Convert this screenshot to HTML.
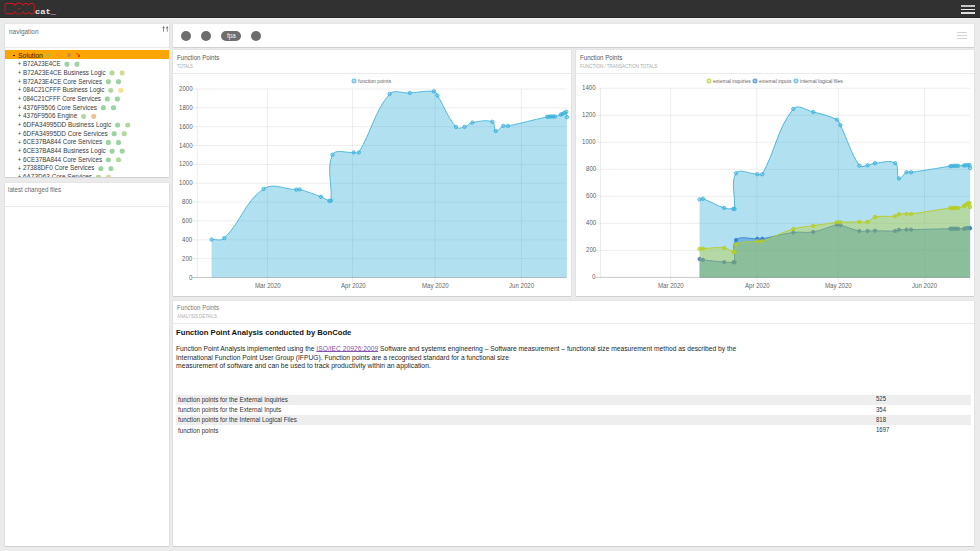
<!DOCTYPE html>
<html><head><meta charset="utf-8">
<style>
*{margin:0;padding:0;box-sizing:border-box}
html,body{width:980px;height:551px;overflow:hidden;background:#ebebeb;font-family:"Liberation Sans",sans-serif;color:#333}
.a{position:absolute}
.t{position:absolute;white-space:nowrap;transform-origin:0 0}
.pn{position:absolute;background:#fff;box-shadow:0 0 0 0.6px rgba(0,0,0,.045),0 0.7px 0.5px 0.2px rgba(0,0,0,.09)}
.sep{position:absolute;height:1px;background:#ebebeb}
.dot{position:absolute;width:4.8px;height:4.8px;border-radius:1.8px}
</style></head><body>

<div class="a" style="left:0;top:0;width:980px;height:17px;background:#313131"></div>
<div class="a" style="left:0;top:17px;width:980px;height:1px;background:#272727"></div>
<div class="a" style="left:0;top:18px;width:980px;height:1.3px;background:#f3f3f3"></div>
<svg class="a" style="left:0;top:0" width="40" height="18" viewBox="0 0 40 18"><g fill="none" stroke="#d8141a" stroke-width="1.7" stroke-linejoin="round"><path d="M5.5 5.2 Q5.5 3.9 6.8 3.9 L11.9 3.9 Q14.6 3.9 14.6 6.6 L14.6 10.6 Q14.6 13.3 11.9 13.3 L6.8 13.3 Q5.5 13.3 5.5 12 Z"/><path d="M24.3 8.6 A5.15 5.15 0 1 1 14.0 8.6 A5.15 5.15 0 1 1 24.3 8.6 Z"/><path d="M23.7 6.6 Q23.7 3.9 26.0 3.9 L26.9 3.9 L28.5 5.7 L30.1 3.9 L32.5 3.9 Q33.8 3.9 33.8 5.2 L33.8 12.0 Q33.8 13.3 32.5 13.3 L30.1 13.3 L28.5 11.5 L26.9 13.3 L26.0 13.3 Q23.7 13.3 23.7 10.6 Z"/></g><g fill="#313131"><path d="M5.5 5.2 Q5.5 3.9 6.8 3.9 L11.9 3.9 Q14.6 3.9 14.6 6.6 L14.6 10.6 Q14.6 13.3 11.9 13.3 L6.8 13.3 Q5.5 13.3 5.5 12 Z"/><path d="M24.3 8.6 A5.15 5.15 0 1 1 14.0 8.6 A5.15 5.15 0 1 1 24.3 8.6 Z"/><path d="M23.7 6.6 Q23.7 3.9 26.0 3.9 L26.9 3.9 L28.5 5.7 L30.1 3.9 L32.5 3.9 Q33.8 3.9 33.8 5.2 L33.8 12.0 Q33.8 13.3 32.5 13.3 L30.1 13.3 L28.5 11.5 L26.9 13.3 L26.0 13.3 Q23.7 13.3 23.7 10.6 Z"/></g><circle cx="19.15" cy="8.6" r="0.8" fill="#e0141a"/></svg>
<div class="t" style="left:35.00px;top:5.05px;font:bold 8.80px/12px 'Liberation Mono',monospace;color:#e6e6e6;transform:scaleX(0.9600);transform:scaleX(1) scaleY(0.82);transform-origin:0 11px">cat_</div>
<div class="a" style="left:960.5px;top:5.25px;width:14.6px;height:1.7px;background:#c4c4c4"></div>
<div class="a" style="left:960.5px;top:8.75px;width:14.6px;height:1.7px;background:#e6e6e6"></div>
<div class="a" style="left:960.5px;top:12.45px;width:14.6px;height:1.7px;background:#e0e0e0"></div>
<div class="pn" style="left:5px;top:24px;width:164px;height:153px"></div>
<div class="t" style="left:8.50px;top:26.82px;font:normal 6.30px/9px 'Liberation Sans',sans-serif;color:#6a6a6a;transform:scaleX(1.0306)">navigation</div>
<svg class="a" style="left:160px;top:24px" width="10" height="10" viewBox="0 0 10 10"><g fill="#777" stroke="none"><path d="M3.6 2.1 L5.0 4.3 L4.0 4.3 L4.0 7.8 L3.2 7.8 L3.2 4.3 L2.2 4.3 Z"/><path d="M7.2 2.1 L8.6 4.3 L7.6 4.3 L7.6 7.8 L6.8 7.8 L6.8 4.3 L5.8 4.3 Z"/></g></svg>
<div class="sep" style="left:5px;top:47px;width:164px"></div>
<div class="a" style="left:5px;top:50.4px;width:164px;height:8.5px;background:#ffa500"></div>
<div class="a" style="left:12.6px;top:54.5px;width:2px;height:0.9px;background:#3a2a00"></div>
<div class="t" style="left:18.00px;top:50.88px;font:normal 7.27px/10px 'Liberation Sans',sans-serif;color:#2f2400;transform:scaleX(0.9477)">Solution</div>
<div class="dot" style="left:46.10px;top:52.6px;background:#c8b428"></div>
<div class="dot" style="left:56.30px;top:52.6px;background:#fb9e14"></div>
<div class="dot" style="left:66.55px;top:52.6px;background:#c88f4c"></div>
<svg class="a" style="left:75px;top:51px" width="8" height="8" viewBox="0 0 8 8"><g stroke="#e3300f" stroke-width="1.0" fill="#e3300f"><line x1="1.4" y1="2.0" x2="4.2" y2="4.8"/><path d="M5.1 5.9 L2.4 5.7 L4.9 3.2 Z" stroke="none"/></g></svg>
<div class="a" style="left:5px;top:58.9px;width:164px;height:117.7px;overflow:hidden"><div class="a" style="left:-5px;top:-58.9px;width:980px;height:300px">
<div class="t" style="left:18.00px;top:59.34px;font:normal 6.80px/10px 'Liberation Sans',sans-serif;color:#333;transform:scaleX(0.7303)">+</div>
<div class="t" style="left:23.10px;top:59.18px;font:normal 7.27px/10px 'Liberation Sans',sans-serif;color:#3a3a3a;transform:scaleX(0.8381)">B72A23E4CE</div>
<div class="t" style="left:18.00px;top:68.03px;font:normal 6.80px/10px 'Liberation Sans',sans-serif;color:#333;transform:scaleX(0.7303)">+</div>
<div class="t" style="left:23.10px;top:67.87px;font:normal 7.27px/10px 'Liberation Sans',sans-serif;color:#3a3a3a;transform:scaleX(0.8634)">B72A23E4CE Business Logic</div>
<div class="t" style="left:18.00px;top:76.72px;font:normal 6.80px/10px 'Liberation Sans',sans-serif;color:#333;transform:scaleX(0.7303)">+</div>
<div class="t" style="left:23.10px;top:76.56px;font:normal 7.27px/10px 'Liberation Sans',sans-serif;color:#3a3a3a;transform:scaleX(0.8548)">B72A23E4CE Core Services</div>
<div class="t" style="left:18.00px;top:85.41px;font:normal 6.80px/10px 'Liberation Sans',sans-serif;color:#333;transform:scaleX(0.7303)">+</div>
<div class="t" style="left:23.10px;top:85.25px;font:normal 7.27px/10px 'Liberation Sans',sans-serif;color:#3a3a3a;transform:scaleX(0.8572)">084C21CFFF Business Logic</div>
<div class="t" style="left:18.00px;top:94.10px;font:normal 6.80px/10px 'Liberation Sans',sans-serif;color:#333;transform:scaleX(0.7303)">+</div>
<div class="t" style="left:23.10px;top:93.94px;font:normal 7.27px/10px 'Liberation Sans',sans-serif;color:#3a3a3a;transform:scaleX(0.8505)">084C21CFFF Core Services</div>
<div class="t" style="left:18.00px;top:102.79px;font:normal 6.80px/10px 'Liberation Sans',sans-serif;color:#333;transform:scaleX(0.7303)">+</div>
<div class="t" style="left:23.10px;top:102.63px;font:normal 7.27px/10px 'Liberation Sans',sans-serif;color:#3a3a3a;transform:scaleX(0.8767)">4376F9506 Core Services</div>
<div class="t" style="left:18.00px;top:111.48px;font:normal 6.80px/10px 'Liberation Sans',sans-serif;color:#333;transform:scaleX(0.7303)">+</div>
<div class="t" style="left:23.10px;top:111.32px;font:normal 7.27px/10px 'Liberation Sans',sans-serif;color:#3a3a3a;transform:scaleX(0.8837)">4376F9506 Engine</div>
<div class="t" style="left:18.00px;top:120.17px;font:normal 6.80px/10px 'Liberation Sans',sans-serif;color:#333;transform:scaleX(0.7303)">+</div>
<div class="t" style="left:23.10px;top:120.01px;font:normal 7.27px/10px 'Liberation Sans',sans-serif;color:#3a3a3a;transform:scaleX(0.8846)">6DFA34995DD Business Logic</div>
<div class="t" style="left:18.00px;top:128.86px;font:normal 6.80px/10px 'Liberation Sans',sans-serif;color:#333;transform:scaleX(0.7303)">+</div>
<div class="t" style="left:23.10px;top:128.70px;font:normal 7.27px/10px 'Liberation Sans',sans-serif;color:#3a3a3a;transform:scaleX(0.8786)">6DFA34995DD Core Services</div>
<div class="t" style="left:18.00px;top:137.55px;font:normal 6.80px/10px 'Liberation Sans',sans-serif;color:#333;transform:scaleX(0.7303)">+</div>
<div class="t" style="left:23.10px;top:137.39px;font:normal 7.27px/10px 'Liberation Sans',sans-serif;color:#3a3a3a;transform:scaleX(0.8623)">6CE37BA844 Core Services</div>
<div class="t" style="left:18.00px;top:146.24px;font:normal 6.80px/10px 'Liberation Sans',sans-serif;color:#333;transform:scaleX(0.7303)">+</div>
<div class="t" style="left:23.10px;top:146.08px;font:normal 7.27px/10px 'Liberation Sans',sans-serif;color:#3a3a3a;transform:scaleX(0.8718)">6CE37BA844 Business Logic</div>
<div class="t" style="left:18.00px;top:154.93px;font:normal 6.80px/10px 'Liberation Sans',sans-serif;color:#333;transform:scaleX(0.7303)">+</div>
<div class="t" style="left:23.10px;top:154.77px;font:normal 7.27px/10px 'Liberation Sans',sans-serif;color:#3a3a3a;transform:scaleX(0.8623)">6CE37BA844 Core Services</div>
<div class="t" style="left:18.00px;top:163.62px;font:normal 6.80px/10px 'Liberation Sans',sans-serif;color:#333;transform:scaleX(0.7303)">+</div>
<div class="t" style="left:23.10px;top:163.46px;font:normal 7.27px/10px 'Liberation Sans',sans-serif;color:#3a3a3a;transform:scaleX(0.8759)">27388DF0 Core Services</div>
<div class="t" style="left:18.00px;top:172.31px;font:normal 6.80px/10px 'Liberation Sans',sans-serif;color:#333;transform:scaleX(0.7303)">+</div>
<div class="t" style="left:23.10px;top:172.15px;font:normal 7.27px/10px 'Liberation Sans',sans-serif;color:#3a3a3a;transform:scaleX(0.8860)">6A73D63 Core Services</div>
<svg class="a" style="left:0;top:0" width="200" height="300" viewBox="0 0 200 300"><rect x="64.45" y="61.85" width="4.9" height="4.9" rx="1.8" fill="#9cd3a3"/><rect x="74.55" y="61.85" width="4.9" height="4.9" rx="1.8" fill="#9cd3a3"/><rect x="109.55" y="70.54" width="4.9" height="4.9" rx="1.8" fill="#b3d89c"/><rect x="119.65" y="70.54" width="4.9" height="4.9" rx="1.8" fill="#d2dd9a"/><rect x="105.95" y="79.23" width="4.9" height="4.9" rx="1.8" fill="#9cd3a3"/><rect x="116.05" y="79.23" width="4.9" height="4.9" rx="1.8" fill="#9cd3a3"/><rect x="108.25" y="87.92" width="4.9" height="4.9" rx="1.8" fill="#b3d89c"/><rect x="118.35" y="87.92" width="4.9" height="4.9" rx="1.8" fill="#f7df8c"/><rect x="104.85" y="96.61" width="4.9" height="4.9" rx="1.8" fill="#9cd3a3"/><rect x="114.95" y="96.61" width="4.9" height="4.9" rx="1.8" fill="#9cd3a3"/><rect x="100.90" y="105.30" width="4.9" height="4.9" rx="1.8" fill="#9cd3a3"/><rect x="111.00" y="105.30" width="4.9" height="4.9" rx="1.8" fill="#9cd3a3"/><rect x="81.15" y="113.99" width="4.9" height="4.9" rx="1.8" fill="#b3d89c"/><rect x="91.25" y="113.99" width="4.9" height="4.9" rx="1.8" fill="#f4c08c"/><rect x="115.15" y="122.68" width="4.9" height="4.9" rx="1.8" fill="#9cd3a3"/><rect x="125.25" y="122.68" width="4.9" height="4.9" rx="1.8" fill="#b3d89c"/><rect x="111.70" y="131.37" width="4.9" height="4.9" rx="1.8" fill="#9cd3a3"/><rect x="121.80" y="131.37" width="4.9" height="4.9" rx="1.8" fill="#b3d89c"/><rect x="105.95" y="140.06" width="4.9" height="4.9" rx="1.8" fill="#9cd3a3"/><rect x="116.05" y="140.06" width="4.9" height="4.9" rx="1.8" fill="#9cd3a3"/><rect x="109.65" y="148.75" width="4.9" height="4.9" rx="1.8" fill="#9cd3a3"/><rect x="119.75" y="148.75" width="4.9" height="4.9" rx="1.8" fill="#9cd3a3"/><rect x="105.95" y="157.44" width="4.9" height="4.9" rx="1.8" fill="#9cd3a3"/><rect x="116.05" y="157.44" width="4.9" height="4.9" rx="1.8" fill="#b3d89c"/><rect x="98.35" y="166.13" width="4.9" height="4.9" rx="1.8" fill="#9cd3a3"/><rect x="108.45" y="166.13" width="4.9" height="4.9" rx="1.8" fill="#9cd3a3"/><rect x="95.95" y="174.82" width="4.9" height="4.9" rx="1.8" fill="#b3d89c"/><rect x="106.05" y="174.82" width="4.9" height="4.9" rx="1.8" fill="#d2dd9a"/></svg>
</div></div>
<div class="pn" style="left:5px;top:183px;width:164px;height:363px"></div>
<div class="t" style="left:7.80px;top:184.50px;font:normal 6.34px/9px 'Liberation Sans',sans-serif;color:#6a6a6a;transform:scaleX(0.9802)">latest changed files</div>
<div class="sep" style="left:5px;top:206px;width:164px"></div>
<div class="pn" style="left:173px;top:24px;width:801.2px;height:23.2px"></div>
<div class="a" style="left:180.60px;top:30.9px;width:10.4px;height:10.2px;border-radius:50%;background:#6d6d6d"></div>
<div class="a" style="left:201.00px;top:30.9px;width:10.4px;height:10.2px;border-radius:50%;background:#6d6d6d"></div>
<div class="a" style="left:251.00px;top:30.9px;width:10.4px;height:10.2px;border-radius:50%;background:#6d6d6d"></div>
<div class="a" style="left:221.4px;top:30.9px;width:19.6px;height:10.2px;border-radius:5.1px;background:#6d6d6d"></div>
<div class="t" style="left:226.80px;top:31.02px;font:normal 6.30px/9px 'Liberation Sans',sans-serif;color:#f4f4f4;transform:scaleX(1.0042)">fpa</div>
<div class="a" style="left:956.8px;top:32.10px;width:10px;height:1px;background:#d4d4d4"></div>
<div class="a" style="left:956.8px;top:35.10px;width:10px;height:1px;background:#d4d4d4"></div>
<div class="a" style="left:956.8px;top:38.00px;width:10px;height:1px;background:#d4d4d4"></div>
<div class="pn" style="left:173px;top:50.4px;width:398.2px;height:245.6px"></div>
<div class="t" style="left:176.80px;top:53.08px;font:normal 6.98px/10px 'Liberation Sans',sans-serif;color:#565656;transform:scaleX(0.8792)">Function Points</div>
<div class="t" style="left:176.80px;top:62.89px;font:normal 5.23px/7px 'Liberation Sans',sans-serif;color:#a9aca6;transform:scaleX(0.7956)">TOTALS</div>
<div class="sep" style="left:173px;top:72.8px;width:398.2px"></div>
<div class="pn" style="left:576px;top:50.4px;width:398.2px;height:245.6px"></div>
<div class="t" style="left:579.80px;top:53.08px;font:normal 6.98px/10px 'Liberation Sans',sans-serif;color:#565656;transform:scaleX(0.8792)">Function Points</div>
<div class="t" style="left:579.80px;top:62.89px;font:normal 5.23px/7px 'Liberation Sans',sans-serif;color:#a9aca6;transform:scaleX(0.8601)">FUNCTION / TRANSACTION TOTALS</div>
<div class="sep" style="left:576px;top:72.8px;width:398.2px"></div>
<svg class="a" style="left:0;top:0" width="980" height="551" viewBox="0 0 980 551">
<g stroke="rgba(0,0,0,0.09)" stroke-width="0.8"><line x1="192.3" y1="277.50" x2="566.9" y2="277.50"/><line x1="192.3" y1="258.65" x2="566.9" y2="258.65"/><line x1="192.3" y1="239.80" x2="566.9" y2="239.80"/><line x1="192.3" y1="220.95" x2="566.9" y2="220.95"/><line x1="192.3" y1="202.10" x2="566.9" y2="202.10"/><line x1="192.3" y1="183.25" x2="566.9" y2="183.25"/><line x1="192.3" y1="164.40" x2="566.9" y2="164.40"/><line x1="192.3" y1="145.55" x2="566.9" y2="145.55"/><line x1="192.3" y1="126.70" x2="566.9" y2="126.70"/><line x1="192.3" y1="107.85" x2="566.9" y2="107.85"/><line x1="192.3" y1="89.00" x2="566.9" y2="89.00"/><line x1="197.30" y1="89.0" x2="197.30" y2="277.5"/><line x1="267.40" y1="89.0" x2="267.40" y2="282.5"/><line x1="352.60" y1="89.0" x2="352.60" y2="282.5"/><line x1="435.00" y1="89.0" x2="435.00" y2="282.5"/><line x1="521.40" y1="89.0" x2="521.40" y2="282.5"/></g>
<path d="M211.60 239.60 C216.68 239.00 220.79 241.52 224.30 238.10 C241.59 221.24 244.65 201.67 263.60 188.90 C273.45 182.27 283.22 189.42 296.30 189.60 C297.62 189.62 298.34 189.03 299.60 189.40 C308.22 191.91 312.56 193.54 321.00 196.80 C324.48 198.14 325.99 199.61 329.40 200.90 C329.99 201.13 330.96 201.23 331.00 200.60 C332.20 182.75 326.30 167.87 332.50 154.70 C335.38 148.59 345.21 153.14 353.70 152.40 C355.73 152.22 357.77 154.08 358.80 152.40 C372.13 130.72 373.98 112.19 389.60 94.00 C394.38 89.00 401.73 93.49 409.80 93.00 C419.41 92.41 424.80 90.52 433.80 91.30 C435.84 91.48 436.25 93.55 437.40 95.40 C445.13 107.79 447.19 116.70 456.00 126.90 C458.07 129.30 461.38 127.75 464.60 126.90 C467.90 126.03 468.91 123.22 472.30 122.60 C480.03 121.18 486.10 119.54 492.40 121.80 C495.46 122.90 493.45 130.15 495.70 131.00 C497.81 131.79 500.05 127.26 503.30 125.90 C504.93 125.22 506.10 126.27 507.90 125.90 C523.66 122.63 531.47 120.36 547.20 116.80 C547.91 116.64 548.28 116.66 549.00 116.60 C549.80 116.54 550.20 116.52 551.00 116.50 C551.80 116.48 552.20 116.50 553.00 116.50 C553.80 116.50 554.23 116.69 555.00 116.50 C557.35 115.93 558.49 115.39 560.80 114.60 C561.41 114.39 561.71 114.27 562.30 114.00 C563.11 113.63 563.52 113.43 564.30 113.00 C565.12 112.55 565.99 111.30 566.30 111.80 C566.90 112.98 566.66 115.04 566.90 117.20 L566.90 277.50 L211.60 277.50 Z" fill="rgba(60,178,218,0.40)"/>
<path d="M211.60 239.60 C216.68 239.00 220.79 241.52 224.30 238.10 C241.59 221.24 244.65 201.67 263.60 188.90 C273.45 182.27 283.22 189.42 296.30 189.60 C297.62 189.62 298.34 189.03 299.60 189.40 C308.22 191.91 312.56 193.54 321.00 196.80 C324.48 198.14 325.99 199.61 329.40 200.90 C329.99 201.13 330.96 201.23 331.00 200.60 C332.20 182.75 326.30 167.87 332.50 154.70 C335.38 148.59 345.21 153.14 353.70 152.40 C355.73 152.22 357.77 154.08 358.80 152.40 C372.13 130.72 373.98 112.19 389.60 94.00 C394.38 89.00 401.73 93.49 409.80 93.00 C419.41 92.41 424.80 90.52 433.80 91.30 C435.84 91.48 436.25 93.55 437.40 95.40 C445.13 107.79 447.19 116.70 456.00 126.90 C458.07 129.30 461.38 127.75 464.60 126.90 C467.90 126.03 468.91 123.22 472.30 122.60 C480.03 121.18 486.10 119.54 492.40 121.80 C495.46 122.90 493.45 130.15 495.70 131.00 C497.81 131.79 500.05 127.26 503.30 125.90 C504.93 125.22 506.10 126.27 507.90 125.90 C523.66 122.63 531.47 120.36 547.20 116.80 C547.91 116.64 548.28 116.66 549.00 116.60 C549.80 116.54 550.20 116.52 551.00 116.50 C551.80 116.48 552.20 116.50 553.00 116.50 C553.80 116.50 554.23 116.69 555.00 116.50 C557.35 115.93 558.49 115.39 560.80 114.60 C561.41 114.39 561.71 114.27 562.30 114.00 C563.11 113.63 563.52 113.43 564.30 113.00 C565.12 112.55 565.99 111.30 566.30 111.80 C566.90 112.98 566.66 115.04 566.90 117.20" fill="none" stroke="#3db2da" stroke-width="0.85"/>
<line x1="192.30" y1="277.50" x2="566.90" y2="277.50" stroke="rgba(0,0,0,0.17)" stroke-width="0.9"/>
<g fill="rgba(60,178,218,0.40)" stroke="#3db2da" stroke-width="0.85"><circle cx="211.60" cy="239.60" r="1.70"/><circle cx="224.30" cy="238.10" r="1.70"/><circle cx="263.60" cy="188.90" r="1.70"/><circle cx="296.30" cy="189.60" r="1.70"/><circle cx="299.60" cy="189.40" r="1.70"/><circle cx="321.00" cy="196.80" r="1.70"/><circle cx="329.40" cy="200.90" r="1.70"/><circle cx="331.00" cy="200.60" r="1.70"/><circle cx="332.50" cy="154.70" r="1.70"/><circle cx="353.70" cy="152.40" r="1.70"/><circle cx="358.80" cy="152.40" r="1.70"/><circle cx="389.60" cy="94.00" r="1.70"/><circle cx="409.80" cy="93.00" r="1.70"/><circle cx="433.80" cy="91.30" r="1.70"/><circle cx="437.40" cy="95.40" r="1.70"/><circle cx="456.00" cy="126.90" r="1.70"/><circle cx="464.60" cy="126.90" r="1.70"/><circle cx="472.30" cy="122.60" r="1.70"/><circle cx="492.40" cy="121.80" r="1.70"/><circle cx="495.70" cy="131.00" r="1.70"/><circle cx="503.30" cy="125.90" r="1.70"/><circle cx="507.90" cy="125.90" r="1.70"/><circle cx="547.20" cy="116.80" r="1.70"/><circle cx="549.00" cy="116.60" r="1.70"/><circle cx="551.00" cy="116.50" r="1.70"/><circle cx="553.00" cy="116.50" r="1.70"/><circle cx="555.00" cy="116.50" r="1.70"/><circle cx="560.80" cy="114.60" r="1.70"/><circle cx="562.30" cy="114.00" r="1.70"/><circle cx="564.30" cy="113.00" r="1.70"/><circle cx="566.30" cy="111.80" r="1.70"/><circle cx="566.90" cy="117.20" r="1.70"/></g>
<g stroke="rgba(0,0,0,0.09)" stroke-width="0.8"><line x1="595.5" y1="277.40" x2="970.1" y2="277.40"/><line x1="595.5" y1="250.37" x2="970.1" y2="250.37"/><line x1="595.5" y1="223.34" x2="970.1" y2="223.34"/><line x1="595.5" y1="196.31" x2="970.1" y2="196.31"/><line x1="595.5" y1="169.29" x2="970.1" y2="169.29"/><line x1="595.5" y1="142.26" x2="970.1" y2="142.26"/><line x1="595.5" y1="115.23" x2="970.1" y2="115.23"/><line x1="595.5" y1="88.20" x2="970.1" y2="88.20"/><line x1="600.50" y1="88.2" x2="600.50" y2="277.4"/><line x1="670.70" y1="88.2" x2="670.70" y2="282.4"/><line x1="756.80" y1="88.2" x2="756.80" y2="282.4"/><line x1="838.30" y1="88.2" x2="838.30" y2="282.4"/><line x1="924.60" y1="88.2" x2="924.60" y2="282.4"/></g>
<path d="M699.60 199.40 C700.92 199.16 701.66 198.37 702.90 198.80 C711.50 201.81 715.48 205.11 724.20 208.00 C727.68 209.15 729.72 208.58 733.40 208.90 C733.84 208.94 734.47 209.33 734.50 208.90 C735.55 195.09 730.38 182.00 736.10 173.30 C739.50 168.12 748.82 173.91 757.30 174.20 C759.30 174.27 761.37 175.89 762.30 174.20 C775.77 149.81 777.38 128.46 793.30 109.00 C797.74 103.58 805.41 110.09 813.20 112.00 C822.89 114.37 828.35 115.50 837.00 119.70 C839.23 120.78 839.27 122.88 840.40 125.20 C848.23 141.24 850.21 152.05 859.40 165.60 C861.09 168.09 864.38 165.80 867.60 165.30 C870.62 164.84 871.96 163.43 875.00 163.20 C883.00 162.59 889.83 159.76 895.20 163.20 C899.39 165.88 896.12 176.26 898.90 178.50 C900.64 179.90 903.18 173.99 906.50 172.30 C908.06 171.51 909.28 172.55 911.10 172.30 C926.80 170.11 934.62 168.60 950.30 166.20 C951.06 166.08 951.44 166.08 952.20 166.00 C953.00 165.92 953.40 165.84 954.20 165.80 C955.00 165.76 955.40 165.80 956.20 165.80 C957.00 165.80 957.40 165.83 958.20 165.80 C960.52 165.71 961.68 165.66 964.00 165.50 C964.60 165.46 964.90 165.39 965.50 165.30 C966.30 165.19 966.70 165.06 967.50 165.00 C968.30 164.94 969.09 164.53 969.50 165.00 C970.10 165.73 969.86 166.80 970.10 168.00 L970.10 277.40 L699.60 277.40 Z" fill="rgba(60,178,218,0.40)"/>
<path d="M699.60 199.40 C700.92 199.16 701.66 198.37 702.90 198.80 C711.50 201.81 715.48 205.11 724.20 208.00 C727.68 209.15 729.72 208.58 733.40 208.90 C733.84 208.94 734.47 209.33 734.50 208.90 C735.55 195.09 730.38 182.00 736.10 173.30 C739.50 168.12 748.82 173.91 757.30 174.20 C759.30 174.27 761.37 175.89 762.30 174.20 C775.77 149.81 777.38 128.46 793.30 109.00 C797.74 103.58 805.41 110.09 813.20 112.00 C822.89 114.37 828.35 115.50 837.00 119.70 C839.23 120.78 839.27 122.88 840.40 125.20 C848.23 141.24 850.21 152.05 859.40 165.60 C861.09 168.09 864.38 165.80 867.60 165.30 C870.62 164.84 871.96 163.43 875.00 163.20 C883.00 162.59 889.83 159.76 895.20 163.20 C899.39 165.88 896.12 176.26 898.90 178.50 C900.64 179.90 903.18 173.99 906.50 172.30 C908.06 171.51 909.28 172.55 911.10 172.30 C926.80 170.11 934.62 168.60 950.30 166.20 C951.06 166.08 951.44 166.08 952.20 166.00 C953.00 165.92 953.40 165.84 954.20 165.80 C955.00 165.76 955.40 165.80 956.20 165.80 C957.00 165.80 957.40 165.83 958.20 165.80 C960.52 165.71 961.68 165.66 964.00 165.50 C964.60 165.46 964.90 165.39 965.50 165.30 C966.30 165.19 966.70 165.06 967.50 165.00 C968.30 164.94 969.09 164.53 969.50 165.00 C970.10 165.73 969.86 166.80 970.10 168.00" fill="none" stroke="#3db2da" stroke-width="0.9"/>
<g fill="rgba(60,178,218,0.40)" stroke="#3db2da" stroke-width="0.85"><circle cx="699.60" cy="199.40" r="1.70"/><circle cx="702.90" cy="198.80" r="1.70"/><circle cx="724.20" cy="208.00" r="1.70"/><circle cx="733.40" cy="208.90" r="1.70"/><circle cx="734.50" cy="208.90" r="1.70"/><circle cx="736.10" cy="173.30" r="1.70"/><circle cx="757.30" cy="174.20" r="1.70"/><circle cx="762.30" cy="174.20" r="1.70"/><circle cx="793.30" cy="109.00" r="1.70"/><circle cx="813.20" cy="112.00" r="1.70"/><circle cx="837.00" cy="119.70" r="1.70"/><circle cx="840.40" cy="125.20" r="1.70"/><circle cx="859.40" cy="165.60" r="1.70"/><circle cx="867.60" cy="165.30" r="1.70"/><circle cx="875.00" cy="163.20" r="1.70"/><circle cx="895.20" cy="163.20" r="1.70"/><circle cx="898.90" cy="178.50" r="1.70"/><circle cx="906.50" cy="172.30" r="1.70"/><circle cx="911.10" cy="172.30" r="1.70"/><circle cx="950.30" cy="166.20" r="1.70"/><circle cx="952.20" cy="166.00" r="1.70"/><circle cx="954.20" cy="165.80" r="1.70"/><circle cx="956.20" cy="165.80" r="1.70"/><circle cx="958.20" cy="165.80" r="1.70"/><circle cx="964.00" cy="165.50" r="1.70"/><circle cx="965.50" cy="165.30" r="1.70"/><circle cx="967.50" cy="165.00" r="1.70"/><circle cx="969.50" cy="165.00" r="1.70"/><circle cx="970.10" cy="168.00" r="1.70"/></g>
<path d="M699.60 259.00 C700.92 259.32 701.55 259.63 702.90 259.80 C711.39 260.87 715.67 261.40 724.20 262.10 C727.87 262.40 729.72 262.23 733.40 262.30 C733.84 262.31 734.45 262.72 734.50 262.30 C735.53 253.80 731.42 244.84 736.10 240.00 C740.54 235.40 748.82 239.12 757.30 238.70 C759.30 238.60 760.33 239.04 762.30 238.70 C774.73 236.56 780.81 234.17 793.30 232.50 C801.17 231.45 805.43 233.29 813.20 231.90 C822.91 230.17 827.44 227.09 837.00 224.70 C838.32 224.37 839.08 224.73 840.40 225.10 C848.04 227.25 851.70 229.33 859.40 231.00 C862.58 231.69 864.32 231.06 867.60 231.00 C870.56 230.94 872.04 230.70 875.00 230.70 C883.08 230.70 887.18 231.30 895.20 231.00 C896.74 230.94 897.37 229.99 898.90 229.80 C901.89 229.43 903.46 229.65 906.50 229.60 C908.34 229.57 909.26 229.64 911.10 229.60 C926.78 229.28 934.62 229.04 950.30 228.70 C951.06 228.68 951.44 228.70 952.20 228.70 C953.00 228.70 953.40 228.70 954.20 228.70 C955.00 228.70 955.40 228.70 956.20 228.70 C957.00 228.70 957.40 228.70 958.20 228.70 C960.52 228.70 961.68 228.76 964.00 228.70 C964.60 228.68 964.91 228.62 965.50 228.50 C966.31 228.34 966.69 228.10 967.50 228.00 C968.29 227.90 968.72 227.91 969.50 228.00 C969.76 228.03 969.86 228.18 970.10 228.30 L970.10 277.40 L699.60 277.40 Z" fill="rgba(50,140,210,0.50)"/>
<path d="M699.60 259.00 C700.92 259.32 701.55 259.63 702.90 259.80 C711.39 260.87 715.67 261.40 724.20 262.10 C727.87 262.40 729.72 262.23 733.40 262.30 C733.84 262.31 734.45 262.72 734.50 262.30 C735.53 253.80 731.42 244.84 736.10 240.00 C740.54 235.40 748.82 239.12 757.30 238.70 C759.30 238.60 760.33 239.04 762.30 238.70 C774.73 236.56 780.81 234.17 793.30 232.50 C801.17 231.45 805.43 233.29 813.20 231.90 C822.91 230.17 827.44 227.09 837.00 224.70 C838.32 224.37 839.08 224.73 840.40 225.10 C848.04 227.25 851.70 229.33 859.40 231.00 C862.58 231.69 864.32 231.06 867.60 231.00 C870.56 230.94 872.04 230.70 875.00 230.70 C883.08 230.70 887.18 231.30 895.20 231.00 C896.74 230.94 897.37 229.99 898.90 229.80 C901.89 229.43 903.46 229.65 906.50 229.60 C908.34 229.57 909.26 229.64 911.10 229.60 C926.78 229.28 934.62 229.04 950.30 228.70 C951.06 228.68 951.44 228.70 952.20 228.70 C953.00 228.70 953.40 228.70 954.20 228.70 C955.00 228.70 955.40 228.70 956.20 228.70 C957.00 228.70 957.40 228.70 958.20 228.70 C960.52 228.70 961.68 228.76 964.00 228.70 C964.60 228.68 964.91 228.62 965.50 228.50 C966.31 228.34 966.69 228.10 967.50 228.00 C968.29 227.90 968.72 227.91 969.50 228.00 C969.76 228.03 969.86 228.18 970.10 228.30" fill="none" stroke="#3b82d2" stroke-width="0.9"/>
<g fill="rgba(50,120,200,0.8)" stroke="#3b82d2" stroke-width="0.85"><circle cx="699.60" cy="259.00" r="1.70"/><circle cx="702.90" cy="259.80" r="1.70"/><circle cx="724.20" cy="262.10" r="1.70"/><circle cx="733.40" cy="262.30" r="1.70"/><circle cx="734.50" cy="262.30" r="1.70"/><circle cx="736.10" cy="240.00" r="1.70"/><circle cx="757.30" cy="238.70" r="1.70"/><circle cx="762.30" cy="238.70" r="1.70"/><circle cx="793.30" cy="232.50" r="1.70"/><circle cx="813.20" cy="231.90" r="1.70"/><circle cx="837.00" cy="224.70" r="1.70"/><circle cx="840.40" cy="225.10" r="1.70"/><circle cx="859.40" cy="231.00" r="1.70"/><circle cx="867.60" cy="231.00" r="1.70"/><circle cx="875.00" cy="230.70" r="1.70"/><circle cx="895.20" cy="231.00" r="1.70"/><circle cx="898.90" cy="229.80" r="1.70"/><circle cx="906.50" cy="229.60" r="1.70"/><circle cx="911.10" cy="229.60" r="1.70"/><circle cx="950.30" cy="228.70" r="1.70"/><circle cx="952.20" cy="228.70" r="1.70"/><circle cx="954.20" cy="228.70" r="1.70"/><circle cx="956.20" cy="228.70" r="1.70"/><circle cx="958.20" cy="228.70" r="1.70"/><circle cx="964.00" cy="228.70" r="1.70"/><circle cx="965.50" cy="228.50" r="1.70"/><circle cx="967.50" cy="228.00" r="1.70"/><circle cx="969.50" cy="228.00" r="1.70"/><circle cx="970.10" cy="228.30" r="1.70"/></g>
<path d="M699.60 249.00 C700.92 248.84 701.57 248.66 702.90 248.60 C711.41 248.22 715.92 246.98 724.20 247.90 C728.12 248.34 729.69 250.52 733.40 252.00 C733.81 252.16 734.37 252.38 734.50 252.00 C735.45 249.26 733.63 245.37 736.10 244.20 C742.75 241.05 748.80 242.17 757.30 241.20 C759.28 240.97 760.42 241.84 762.30 241.20 C774.82 236.96 780.61 232.84 793.30 229.00 C800.97 226.68 805.23 227.04 813.20 225.80 C822.71 224.32 827.47 223.46 837.00 222.20 C838.35 222.02 839.04 222.22 840.40 222.20 C848.00 222.06 851.80 221.91 859.40 221.80 C862.68 221.75 864.59 222.73 867.60 221.80 C870.83 220.81 871.65 217.69 875.00 217.00 C882.69 215.41 887.29 217.06 895.20 216.10 C896.85 215.90 897.29 214.41 898.90 214.10 C901.81 213.53 903.46 213.95 906.50 213.90 C908.34 213.87 909.28 214.15 911.10 213.90 C926.80 211.79 934.61 210.25 950.30 208.00 C951.05 207.89 951.44 208.00 952.20 208.00 C953.00 208.00 953.40 208.00 954.20 208.00 C955.00 208.00 955.40 208.00 956.20 208.00 C957.00 208.00 957.43 208.20 958.20 208.00 C960.55 207.40 961.74 206.93 964.00 206.00 C964.66 205.73 964.91 205.42 965.50 205.00 C966.31 204.42 966.62 203.94 967.50 203.50 C968.22 203.14 969.15 202.53 969.50 203.00 C970.10 203.93 969.86 205.40 970.10 207.00 L970.10 277.40 L699.60 277.40 Z" fill="rgba(185,205,30,0.36)"/>
<path d="M699.60 249.00 C700.92 248.84 701.57 248.66 702.90 248.60 C711.41 248.22 715.92 246.98 724.20 247.90 C728.12 248.34 729.69 250.52 733.40 252.00 C733.81 252.16 734.37 252.38 734.50 252.00 C735.45 249.26 733.63 245.37 736.10 244.20 C742.75 241.05 748.80 242.17 757.30 241.20 C759.28 240.97 760.42 241.84 762.30 241.20 C774.82 236.96 780.61 232.84 793.30 229.00 C800.97 226.68 805.23 227.04 813.20 225.80 C822.71 224.32 827.47 223.46 837.00 222.20 C838.35 222.02 839.04 222.22 840.40 222.20 C848.00 222.06 851.80 221.91 859.40 221.80 C862.68 221.75 864.59 222.73 867.60 221.80 C870.83 220.81 871.65 217.69 875.00 217.00 C882.69 215.41 887.29 217.06 895.20 216.10 C896.85 215.90 897.29 214.41 898.90 214.10 C901.81 213.53 903.46 213.95 906.50 213.90 C908.34 213.87 909.28 214.15 911.10 213.90 C926.80 211.79 934.61 210.25 950.30 208.00 C951.05 207.89 951.44 208.00 952.20 208.00 C953.00 208.00 953.40 208.00 954.20 208.00 C955.00 208.00 955.40 208.00 956.20 208.00 C957.00 208.00 957.43 208.20 958.20 208.00 C960.55 207.40 961.74 206.93 964.00 206.00 C964.66 205.73 964.91 205.42 965.50 205.00 C966.31 204.42 966.62 203.94 967.50 203.50 C968.22 203.14 969.15 202.53 969.50 203.00 C970.10 203.93 969.86 205.40 970.10 207.00" fill="none" stroke="#b7cd1f" stroke-width="0.9"/>
<g fill="rgba(185,205,30,0.6)" stroke="#b7cd1f" stroke-width="0.85"><circle cx="699.60" cy="249.00" r="1.70"/><circle cx="702.90" cy="248.60" r="1.70"/><circle cx="724.20" cy="247.90" r="1.70"/><circle cx="733.40" cy="252.00" r="1.70"/><circle cx="734.50" cy="252.00" r="1.70"/><circle cx="736.10" cy="244.20" r="1.70"/><circle cx="757.30" cy="241.20" r="1.70"/><circle cx="762.30" cy="241.20" r="1.70"/><circle cx="793.30" cy="229.00" r="1.70"/><circle cx="813.20" cy="225.80" r="1.70"/><circle cx="837.00" cy="222.20" r="1.70"/><circle cx="840.40" cy="222.20" r="1.70"/><circle cx="859.40" cy="221.80" r="1.70"/><circle cx="867.60" cy="221.80" r="1.70"/><circle cx="875.00" cy="217.00" r="1.70"/><circle cx="895.20" cy="216.10" r="1.70"/><circle cx="898.90" cy="214.10" r="1.70"/><circle cx="906.50" cy="213.90" r="1.70"/><circle cx="911.10" cy="213.90" r="1.70"/><circle cx="950.30" cy="208.00" r="1.70"/><circle cx="952.20" cy="208.00" r="1.70"/><circle cx="954.20" cy="208.00" r="1.70"/><circle cx="956.20" cy="208.00" r="1.70"/><circle cx="958.20" cy="208.00" r="1.70"/><circle cx="964.00" cy="206.00" r="1.70"/><circle cx="965.50" cy="205.00" r="1.70"/><circle cx="967.50" cy="203.50" r="1.70"/><circle cx="969.50" cy="203.00" r="1.70"/><circle cx="970.10" cy="207.00" r="1.70"/></g>
<line x1="595.50" y1="277.40" x2="970.10" y2="277.40" stroke="rgba(0,0,0,0.17)" stroke-width="0.9"/>
</svg>
<svg class="a" style="left:351.00px;top:78px" width="6" height="6" viewBox="0 0 6 6"><rect x="1.15" y="1.15" width="3.7" height="3.7" rx="1.1" fill="rgba(60,178,218,0.40)" stroke="#3db2da" stroke-width="0.9"/></svg>
<div class="t" style="left:357.90px;top:78.00px;font:normal 4.90px/7px 'Liberation Sans',sans-serif;color:#666;transform:scaleX(1.0475)">function points</div>
<svg class="a" style="left:705.70px;top:78px" width="6" height="6" viewBox="0 0 6 6"><rect x="1.15" y="1.15" width="3.7" height="3.7" rx="1.1" fill="rgba(185,205,30,0.36)" stroke="#b7cd1f" stroke-width="0.9"/></svg>
<div class="t" style="left:712.90px;top:78.00px;font:normal 4.90px/7px 'Liberation Sans',sans-serif;color:#666;transform:scaleX(1.0231)">external inquiries</div>
<svg class="a" style="left:752.00px;top:78px" width="6" height="6" viewBox="0 0 6 6"><rect x="1.15" y="1.15" width="3.7" height="3.7" rx="1.1" fill="rgba(50,140,210,0.50)" stroke="#3b82d2" stroke-width="0.9"/></svg>
<div class="t" style="left:759.00px;top:78.00px;font:normal 4.90px/7px 'Liberation Sans',sans-serif;color:#666;transform:scaleX(1.0198)">external inputs</div>
<svg class="a" style="left:792.70px;top:78px" width="6" height="6" viewBox="0 0 6 6"><rect x="1.15" y="1.15" width="3.7" height="3.7" rx="1.1" fill="rgba(60,178,218,0.40)" stroke="#3db2da" stroke-width="0.9"/></svg>
<div class="t" style="left:799.90px;top:78.00px;font:normal 4.90px/7px 'Liberation Sans',sans-serif;color:#666;transform:scaleX(1.0362)">internal logical files</div>
<div class="t" style="left:188.80px;top:272.55px;font:normal 7.06px/10px 'Liberation Sans',sans-serif;color:#606060;transform:scaleX(0.8662)">0</div>
<div class="t" style="left:182.00px;top:253.70px;font:normal 7.06px/10px 'Liberation Sans',sans-serif;color:#606060;transform:scaleX(0.8662)">200</div>
<div class="t" style="left:182.00px;top:234.85px;font:normal 7.06px/10px 'Liberation Sans',sans-serif;color:#606060;transform:scaleX(0.8662)">400</div>
<div class="t" style="left:182.00px;top:216.00px;font:normal 7.06px/10px 'Liberation Sans',sans-serif;color:#606060;transform:scaleX(0.8662)">600</div>
<div class="t" style="left:182.00px;top:197.15px;font:normal 7.06px/10px 'Liberation Sans',sans-serif;color:#606060;transform:scaleX(0.8662)">800</div>
<div class="t" style="left:178.59px;top:178.30px;font:normal 7.06px/10px 'Liberation Sans',sans-serif;color:#606060;transform:scaleX(0.8662)">1000</div>
<div class="t" style="left:178.59px;top:159.45px;font:normal 7.06px/10px 'Liberation Sans',sans-serif;color:#606060;transform:scaleX(0.8662)">1200</div>
<div class="t" style="left:178.59px;top:140.60px;font:normal 7.06px/10px 'Liberation Sans',sans-serif;color:#606060;transform:scaleX(0.8662)">1400</div>
<div class="t" style="left:178.59px;top:121.75px;font:normal 7.06px/10px 'Liberation Sans',sans-serif;color:#606060;transform:scaleX(0.8662)">1600</div>
<div class="t" style="left:178.59px;top:102.90px;font:normal 7.06px/10px 'Liberation Sans',sans-serif;color:#606060;transform:scaleX(0.8662)">1800</div>
<div class="t" style="left:178.59px;top:84.05px;font:normal 7.06px/10px 'Liberation Sans',sans-serif;color:#606060;transform:scaleX(0.8662)">2000</div>
<div class="t" style="left:592.40px;top:272.45px;font:normal 7.06px/10px 'Liberation Sans',sans-serif;color:#606060;transform:scaleX(0.8662)">0</div>
<div class="t" style="left:585.60px;top:245.43px;font:normal 7.06px/10px 'Liberation Sans',sans-serif;color:#606060;transform:scaleX(0.8662)">200</div>
<div class="t" style="left:585.60px;top:218.40px;font:normal 7.06px/10px 'Liberation Sans',sans-serif;color:#606060;transform:scaleX(0.8662)">400</div>
<div class="t" style="left:585.60px;top:191.37px;font:normal 7.06px/10px 'Liberation Sans',sans-serif;color:#606060;transform:scaleX(0.8662)">600</div>
<div class="t" style="left:585.60px;top:164.34px;font:normal 7.06px/10px 'Liberation Sans',sans-serif;color:#606060;transform:scaleX(0.8662)">800</div>
<div class="t" style="left:582.19px;top:137.31px;font:normal 7.06px/10px 'Liberation Sans',sans-serif;color:#606060;transform:scaleX(0.8662)">1000</div>
<div class="t" style="left:582.19px;top:110.28px;font:normal 7.06px/10px 'Liberation Sans',sans-serif;color:#606060;transform:scaleX(0.8662)">1200</div>
<div class="t" style="left:582.19px;top:83.25px;font:normal 7.06px/10px 'Liberation Sans',sans-serif;color:#606060;transform:scaleX(0.8662)">1400</div>
<div class="t" style="left:254.90px;top:280.73px;font:normal 6.83px/10px 'Liberation Sans',sans-serif;color:#666;transform:scaleX(0.8906)">Mar 2020</div>
<div class="t" style="left:340.55px;top:280.73px;font:normal 6.83px/10px 'Liberation Sans',sans-serif;color:#666;transform:scaleX(0.8906)">Apr 2020</div>
<div class="t" style="left:421.94px;top:280.73px;font:normal 6.83px/10px 'Liberation Sans',sans-serif;color:#666;transform:scaleX(0.8906)">May 2020</div>
<div class="t" style="left:509.18px;top:280.73px;font:normal 6.83px/10px 'Liberation Sans',sans-serif;color:#666;transform:scaleX(0.8906)">Jun 2020</div>
<div class="t" style="left:658.15px;top:280.73px;font:normal 6.83px/10px 'Liberation Sans',sans-serif;color:#666;transform:scaleX(0.8906)">Mar 2020</div>
<div class="t" style="left:744.75px;top:280.73px;font:normal 6.83px/10px 'Liberation Sans',sans-serif;color:#666;transform:scaleX(0.8906)">Apr 2020</div>
<div class="t" style="left:825.24px;top:280.73px;font:normal 6.83px/10px 'Liberation Sans',sans-serif;color:#666;transform:scaleX(0.8906)">May 2020</div>
<div class="t" style="left:912.38px;top:280.73px;font:normal 6.83px/10px 'Liberation Sans',sans-serif;color:#666;transform:scaleX(0.8906)">Jun 2020</div>
<div class="pn" style="left:173px;top:300.6px;width:801.2px;height:245.4px"></div>
<div class="t" style="left:176.90px;top:303.38px;font:normal 6.70px/9px 'Liberation Sans',sans-serif;color:#7a7a7a;transform:scaleX(0.9138)">Function Points</div>
<div class="t" style="left:176.90px;top:312.76px;font:normal 5.30px/7px 'Liberation Sans',sans-serif;color:#ababab;transform:scaleX(0.8193)">ANALYSIS DETAILS</div>
<div class="sep" style="left:173px;top:322.8px;width:801.2px"></div>
<div class="t" style="left:176.10px;top:327.58px;font:bold 7.27px/10px 'Liberation Sans',sans-serif;color:#141414;transform:scaleX(1.0563)">Function Point Analysis conducted by BonCode</div>
<div class="t" style="left:175.90px;top:343.95px;font:normal 6.50px/9px 'Liberation Sans',sans-serif;color:#262626;transform:scaleX(1.0304)">Function Point Analysis implemented using the <u style="color:#8552ad;text-decoration-thickness:0.5px;text-underline-offset:0.3px">ISO/IEC 20926:2009</u> Software and systems engineering – Software measurement – functional size measurement method as described by the</div>
<div class="t" style="left:175.90px;top:352.65px;font:normal 6.50px/9px 'Liberation Sans',sans-serif;color:#262626;transform:scaleX(1.0295)">International Function Point User Group (IFPUG). Function points are a recognised standard for a functional size</div>
<div class="t" style="left:175.90px;top:361.45px;font:normal 6.50px/9px 'Liberation Sans',sans-serif;color:#262626;transform:scaleX(1.0479)">measurement of software and can be used to track productivity within an application.</div>
<div class="a" style="left:175.5px;top:394.80px;width:795.8px;height:9.8px;background:#eeeeee"></div>
<div class="t" style="left:178.30px;top:395.00px;font:normal 6.34px/9px 'Liberation Sans',sans-serif;color:#333;transform:scaleX(0.9881)">function points for the External Inquiries</div>
<div class="t" style="left:876.00px;top:394.34px;font:normal 6.80px/10px 'Liberation Sans',sans-serif;color:#333;transform:scaleX(0.8816)">525</div>
<div class="t" style="left:178.30px;top:405.17px;font:normal 6.34px/9px 'Liberation Sans',sans-serif;color:#333;transform:scaleX(0.9881)">function points for the External Inputs</div>
<div class="t" style="left:876.00px;top:404.51px;font:normal 6.80px/10px 'Liberation Sans',sans-serif;color:#333;transform:scaleX(0.8816)">354</div>
<div class="a" style="left:175.5px;top:415.06px;width:795.8px;height:9.8px;background:#eeeeee"></div>
<div class="t" style="left:178.30px;top:415.34px;font:normal 6.34px/9px 'Liberation Sans',sans-serif;color:#333;transform:scaleX(0.9881)">function points for the Internal Logical Files</div>
<div class="t" style="left:876.00px;top:414.68px;font:normal 6.80px/10px 'Liberation Sans',sans-serif;color:#333;transform:scaleX(0.8816)">818</div>
<div class="t" style="left:178.30px;top:425.51px;font:normal 6.34px/9px 'Liberation Sans',sans-serif;color:#333;transform:scaleX(0.9881)">function points</div>
<div class="t" style="left:876.00px;top:424.85px;font:normal 6.80px/10px 'Liberation Sans',sans-serif;color:#333;transform:scaleX(0.8816)">1697</div>
</body></html>
